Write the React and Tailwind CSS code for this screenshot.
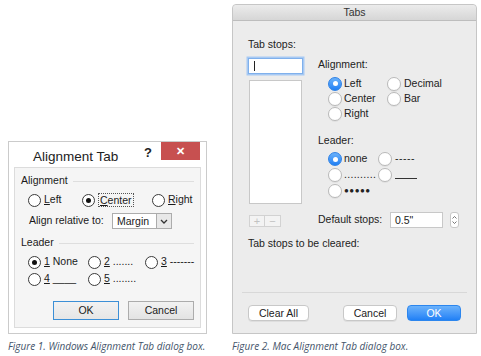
import React from "react";

const winFont = "font-['Liberation_Sans',Arial,sans-serif]";
const macFont = "font-['Liberation_Sans',Arial,sans-serif]";

function WinRadio({ checked }) {
  return (
    <span className="w-[13px] h-[13px] rounded-full border border-[#3a3a3a] bg-white flex items-center justify-center shrink-0">
      {checked && <span className="w-[5px] h-[5px] rounded-full bg-[#111]" />}
    </span>
  );
}

function WinOption({ checked, label, width, focus }) {
  return (
    <div className={`flex items-center gap-[3px] whitespace-nowrap shrink-0 ${width}`}>
      <WinRadio checked={checked} />
      <span className={focus ? "border border-dotted border-[#555] px-[1px] leading-[12px]" : ""}>{label}</span>
    </div>
  );
}

function MacRadio({ checked }) {
  if (checked)
    return (
      <span className="w-[14px] h-[14px] rounded-full bg-gradient-to-b from-[#69b1fa] to-[#1d7ff4] border border-[#2f82e6] flex items-center justify-center shrink-0">
        <span className="w-[5px] h-[5px] rounded-full bg-white" />
      </span>
    );
  return <span className="w-[14px] h-[14px] rounded-full bg-white border border-[#b9b9b9] shadow-[0_1px_0_rgba(0,0,0,0.05)] shrink-0" />;
}

function MacOption({ checked, children, width }) {
  return (
    <div className={`flex items-center gap-[2px] whitespace-nowrap ${width}`}>
      <MacRadio checked={checked} />
      {children}
    </div>
  );
}

function WindowsDialog() {
  return (
    <div className={`w-[199px] h-[193px] border border-[#cbcbcb] bg-white flex flex-col text-[10.5px] text-[#1a1a1a] ${winFont}`}>
      <div className="h-[25px] flex items-start shrink-0">
        <span className="pl-[24px] pt-[5px] text-[13.5px] text-[#222]">Alignment Tab</span>
        <span className="ml-auto mt-[1px] mr-[9px] text-[13px] font-bold text-[#222]">?</span>
        <div className="w-[39px] h-[18px] bg-[#c75050] mr-[6px] flex items-center justify-center text-white text-[11px] font-bold">✕</div>
      </div>
      <div className="mx-[5px] h-[161px] border border-[#dcdcdc] bg-[#f5f5f5] pl-[6px] pr-[6px] pt-[6px]">
        <div className="h-[14px] flex items-center gap-[5px]">
          <span>Alignment</span>
          <span className="flex-1 h-px bg-[#dedede]" />
        </div>
        <div className="mt-[4px] h-[16px] flex items-center pl-[7px]">
          <WinOption width="w-[54px]" label={<><u>L</u>eft</>} />
          <WinOption width="w-[70px]" checked focus label={<><u>C</u>enter</>} />
          <WinOption label={<><u>R</u>ight</>} />
        </div>
        <div className="mt-[5px] h-[16px] flex items-center pl-[8px]">
          <span className="w-[83px]">Align relative to:</span>
          <div className="w-[60px] h-[16px] border border-[#acacac] bg-white flex">
            <span className="flex-1 pl-[4px] leading-[14px]">Margin</span>
            <span className="w-[15px] border-l border-[#acacac] bg-[#e8e8e8] flex items-center justify-center">
              <svg width="8" height="5" viewBox="0 0 8 5"><path d="M1 1 L4 4 L7 1" fill="none" stroke="#333" strokeWidth="1.3" /></svg>
            </span>
          </div>
        </div>
        <div className="mt-[7px] h-[14px] flex items-center gap-[5px]">
          <span>Leader</span>
          <span className="flex-1 h-px bg-[#dedede]" />
        </div>
        <div className="mt-[4px] h-[16px] flex items-center pl-[7px]">
          <WinOption width="w-[60px]" checked label={<><u>1</u> None</>} />
          <WinOption width="w-[57px]" label={<><u>2</u> .......</>} />
          <WinOption label={<><u>3</u> -------</>} />
        </div>
        <div className="mt-[1px] h-[16px] flex items-center pl-[7px]">
          <WinOption width="w-[60px]" label={<><u>4</u> ____</>} />
          <WinOption label={<><u>5</u> ........</>} />
        </div>
        <div className="mt-[14px] flex justify-end gap-[9px]">
          <button className="w-[66px] h-[19px] border border-[#3c8fd6] bg-gradient-to-b from-[#f2f2f2] to-[#e6e6e6] text-[10.5px]">OK</button>
          <button className="w-[66px] h-[19px] border border-[#acacac] bg-gradient-to-b from-[#f2f2f2] to-[#e3e3e3] text-[10.5px]">Cancel</button>
        </div>
      </div>
    </div>
  );
}

function MacDialog() {
  return (
    <div className={`w-[245px] h-[330px] border border-[#c6c6c6] rounded-t-[4px] bg-[#ececec] flex flex-col text-[10.5px] text-[#222] ${macFont}`}>
      <div className="h-[16px] shrink-0 rounded-t-[4px] bg-gradient-to-b from-[#ececec] to-[#d6d6d6] border-b border-[#bdbdbd] flex items-center justify-center text-[10.5px] text-[#333]">
        Tabs
      </div>
      <div className="flex pl-[15px]">
        <div className="w-[55px] pt-[16px] flex flex-col">
          <div className="h-[14px] leading-[14px]">Tab stops:</div>
          <div className="mt-[7px] h-[16px] bg-white border border-[#7fb0ec] shadow-[0_0_0_1.5px_#a7c9f3] flex items-center pl-[5px]">
            <span className="w-px h-[10px] bg-[#222]" />
          </div>
          <div className="mt-[6px] ml-[1px] w-[53px] h-[124px] bg-white border border-[#c8c8c8]" />
          <div className="mt-[11px] ml-[1px] flex">
            <span className="w-[16px] h-[12px] border border-[#d2d2d2] bg-[#f3f3f3] text-[#c2c2c2] text-[11px] leading-[10px] flex justify-center">+</span>
            <span className="w-[16px] h-[12px] border border-l-0 border-[#d2d2d2] bg-[#f3f3f3] text-[#c2c2c2] text-[11px] leading-[10px] flex justify-center">−</span>
          </div>
        </div>
        <div className="ml-[15px] pt-[36px] flex flex-col">
          <div className="h-[14px] leading-[14px]">Alignment:</div>
          <div className="mt-[5px] pl-[10px]">
            <div className="h-[15px] flex items-center">
              <MacOption checked width="w-[59px]"><span>Left</span></MacOption>
              <MacOption><span className="ml-[1px]">Decimal</span></MacOption>
            </div>
            <div className="h-[15px] flex items-center">
              <MacOption width="w-[59px]"><span>Center</span></MacOption>
              <MacOption><span className="ml-[1px]">Bar</span></MacOption>
            </div>
            <div className="h-[15px] flex items-center">
              <MacOption><span>Right</span></MacOption>
            </div>
          </div>
          <div className="mt-[12px] h-[14px] leading-[14px]">Leader:</div>
          <div className="mt-[4px] pl-[10px]">
            <div className="h-[16px] flex items-center">
              <MacOption checked width="w-[50px]"><span>none</span></MacOption>
              <MacOption><span className="ml-[1px] tracking-[0.5px]">-----</span></MacOption>
            </div>
            <div className="h-[16px] flex items-center">
              <MacOption width="w-[50px]"><span className="tracking-[0.3px]">..........</span></MacOption>
              <MacOption><span className="ml-[1px] mt-[7px] w-[22px] h-px bg-[#333]" /></MacOption>
            </div>
            <div className="h-[16px] flex items-center">
              <MacOption><span className="text-[8px] tracking-[0.5px]">●●●●●</span></MacOption>
            </div>
          </div>
          <div className="mt-[13px] h-[16px] flex items-center">
            <span className="w-[72px]">Default stops:</span>
            <div className="w-[53px] h-[16px] bg-white border border-[#c8c8c8] pl-[4px] leading-[14px]">0.5"</div>
            <div className="ml-[7px] w-[9px] h-[16px] bg-white border border-[#c8c8c8] rounded-[3px] flex flex-col items-center justify-center gap-[2px]">
              <svg width="5" height="3" viewBox="0 0 5 3"><path d="M0.5 2.5 L2.5 0.5 L4.5 2.5" fill="none" stroke="#555" strokeWidth="0.8" /></svg>
              <svg width="5" height="3" viewBox="0 0 5 3"><path d="M0.5 0.5 L2.5 2.5 L4.5 0.5" fill="none" stroke="#555" strokeWidth="0.8" /></svg>
            </div>
          </div>
        </div>
      </div>
      <div className="mt-[8px] pl-[15px] h-[14px] leading-[14px]">Tab stops to be cleared:</div>
      <div className="mt-[42px] mx-[9px] h-px bg-[#d8d8d8]" />
      <div className="mt-[12px] flex items-center pl-[15px] pr-[15px]">
        <button className="w-[61px] h-[16px] rounded-[4px] bg-white border border-[#c8c8c8] shadow-[0_1px_0_rgba(0,0,0,0.06)] text-[10.5px] text-[#222]">Clear All</button>
        <button className="ml-auto w-[54px] h-[16px] rounded-[4px] bg-white border border-[#c8c8c8] shadow-[0_1px_0_rgba(0,0,0,0.06)] text-[10.5px] text-[#222]">Cancel</button>
        <button className="ml-[10px] w-[54px] h-[16px] rounded-[4px] bg-gradient-to-b from-[#6bb2fb] to-[#1f80f6] border border-[#2c86ee] text-[10.5px] text-white">OK</button>
      </div>
    </div>
  );
}

export default function App() {
  const caption = "mt-[6px] h-[12px] leading-[12px] italic text-[10px] text-[#44546a] font-['Open_Sans',sans-serif] whitespace-nowrap";
  return (
    <div className="w-[481px] h-[356px] bg-white flex items-end pl-[8px] pb-[4px] overflow-hidden">
      <div className="w-[199px] shrink-0 flex flex-col">
        <WindowsDialog />
        <div className={caption}>Figure 1. Windows Alignment Tab dialog box.</div>
      </div>
      <div className="ml-[25px] w-[245px] shrink-0 flex flex-col">
        <MacDialog />
        <div className={caption}>Figure 2. Mac Alignment Tab dialog box.</div>
      </div>
    </div>
  );
}
